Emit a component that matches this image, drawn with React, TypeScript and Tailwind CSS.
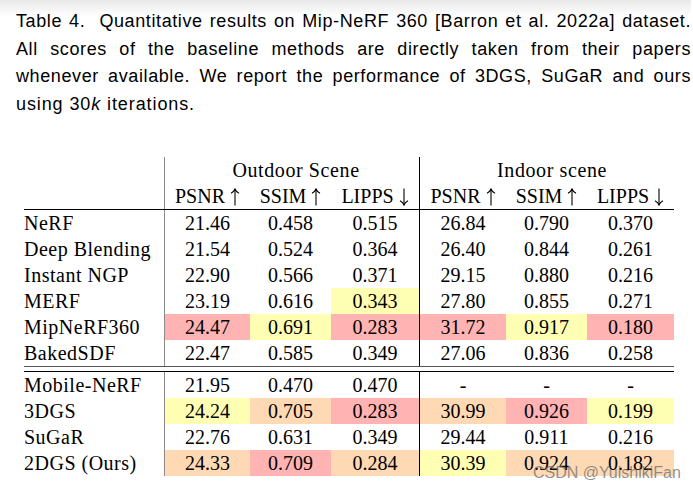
import type { ReactNode } from "react";

// ***************************************************************************************************************

type tone = "" | "r" | "o" | "y";

type rowType = {
    name: string;
    values: string[];
    tones?: tone[];
};

const toneClass: Record<tone, string> = {
    "": "",
    "r": "bg-[#ffb3b3]",
    "o": "bg-[#ffd9b3]",
    "y": "bg-[#ffffb3]",
};

const widths = [
    "w-[141px]",
    "w-[85px]",
    "w-[81px]",
    "w-[89px]",
    "w-[86px]",
    "w-[81px]",
    "w-[87px]",
];

const upper: rowType[] = [
    { name: "NeRF", values: ["21.46", "0.458", "0.515", "26.84", "0.790", "0.370"] },
    { name: "Deep Blending", values: ["21.54", "0.524", "0.364", "26.40", "0.844", "0.261"] },
    { name: "Instant NGP", values: ["22.90", "0.566", "0.371", "29.15", "0.880", "0.216"] },
    { name: "MERF", values: ["23.19", "0.616", "0.343", "27.80", "0.855", "0.271"], tones: ["", "", "y", "", "", ""] },
    { name: "MipNeRF360", values: ["24.47", "0.691", "0.283", "31.72", "0.917", "0.180"], tones: ["r", "y", "r", "r", "y", "r"] },
    { name: "BakedSDF", values: ["22.47", "0.585", "0.349", "27.06", "0.836", "0.258"] },
];

const lower: rowType[] = [
    { name: "Mobile-NeRF", values: ["21.95", "0.470", "0.470", "-", "-", "-"] },
    { name: "3DGS", values: ["24.24", "0.705", "0.283", "30.99", "0.926", "0.199"], tones: ["y", "o", "r", "o", "r", "y"] },
    { name: "SuGaR", values: ["22.76", "0.631", "0.349", "29.44", "0.911", "0.216"] },
    { name: "2DGS (Ours)", values: ["24.33", "0.709", "0.284", "30.39", "0.924", "0.182"], tones: ["o", "r", "o", "y", "o", "o"] },
];

// thin tall arrow like the Libertine one
function Arrow({ down = false }: { down?: boolean }) {
    return <svg width="10" height="18" viewBox="0 0 10 18" className={`inline-block align-[-3px] ml-[5px] ${down ? "rotate-180" : ""}`} fill="none" stroke="black" strokeWidth="1.1">
        <path d="M5 1.2 V17.5" />
        <path d="M1 5.2 Q4 3.6 5 1 Q6 3.6 9 5.2" />
    </svg>
};

function Cell({ index, tone = "", children }: { index: number, tone?: tone, children?: ReactNode }) {
    const border = index === 0
        ? "border-r border-[#8a8a8a] text-left tracking-[0.5px]"
        : index === 3 ? "border-r border-black text-center" : "text-center";

    return <div className={`${widths[index]} ${border} ${toneClass[tone]} shrink-0 h-[26px] leading-[26px]`}>
        {children}
    </div>
};

function Row({ row }: { row: rowType }) {
    return <div className="flex flex-row">
        <Cell index={0}>{row.name}</Cell>

        {row.values.map((v, i) => <Cell key={i} index={i + 1} tone={row.tones?.[i] ?? ""}>{v}</Cell>)}
    </div>
};

function App() {
    const metrics = [
        ["PSNR", false],
        ["SSIM", false],
        ["LIPPS", true],
        ["PSNR", false],
        ["SSIM", false],
        ["LIPPS", true],
    ] as [string, boolean][];

    return <div className="relative w-[693px] h-[490px] overflow-hidden bg-white text-black">
        <div className="bg-[linear-gradient(to_bottom,#e8e8e8,#ffffff_16px)] pt-[8px] pl-[16px] w-[691px] font-['Liberation_Sans',sans-serif] text-[18px] leading-[27.5px] tracking-[0.6px]">
            <div className="whitespace-nowrap text-justify [text-align-last:justify]">Table 4.&nbsp; Quantitative results on Mip-NeRF 360 [Barron et al. 2022a] dataset.</div>
            <div className="whitespace-nowrap text-justify [text-align-last:justify]">All scores of the baseline methods are directly taken from their papers</div>
            <div className="whitespace-nowrap text-justify [text-align-last:justify]">whenever available. We report the performance of 3DGS, SuGaR and ours</div>
            <div className="whitespace-nowrap tracking-[0.9px]">using 30<span className="italic">k</span> iterations.</div>
        </div>

        <section className="ml-[24px] mt-[39px] w-[650px] font-['Liberation_Serif',serif] text-[20px]">
            <header>
                <div className="flex flex-row">
                    <Cell index={0} />
                    <div className="w-[255px] shrink-0 h-[26px] leading-[26px] text-center border-r border-black tracking-[0.6px] pl-[8px]">Outdoor Scene</div>
                    <div className="w-[254px] shrink-0 h-[26px] leading-[26px] text-center tracking-[0.6px] pl-[10px]">Indoor scene</div>
                </div>

                <div className="flex flex-row">
                    <Cell index={0} />
                    {metrics.map(([m, down], i) => <Cell key={i} index={i + 1}>{m}<Arrow down={down} /></Cell>)}
                </div>
            </header>

            <div className="h-px bg-black w-full" />

            {upper.map(r => <Row key={r.name} row={r} />)}

            <div className="h-[6px] border-t border-[#555] border-b-[1.5px] border-b-black w-full" />

            {lower.map(r => <Row key={r.name} row={r} />)}
        </section>

        <div className="absolute left-[533px] top-[463px] font-['Liberation_Sans',sans-serif] text-[16px] leading-[20px] text-[rgba(110,110,110,0.75)]">
            CSDN @YuishikiFan
        </div>
    </div>
};

export default App;
